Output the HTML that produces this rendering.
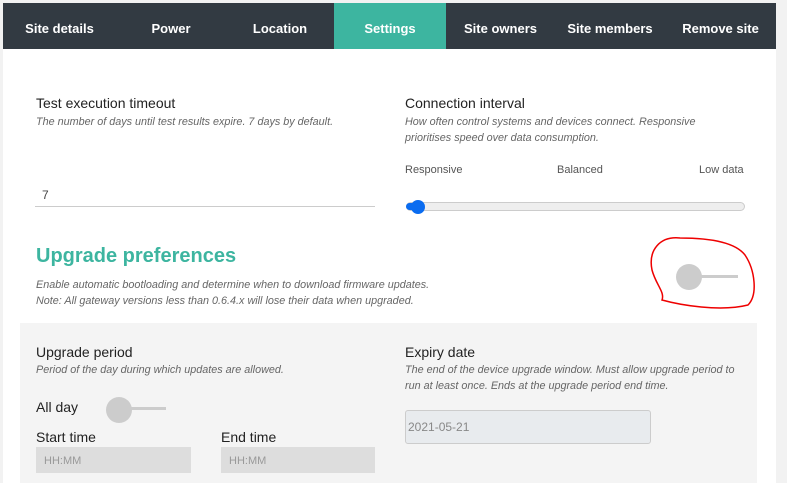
<!DOCTYPE html>
<html><head><style>
body{margin:0;width:787px;height:476px;background:#f2f2f2;font-family:"Liberation Sans",sans-serif;overflow:hidden;position:relative}
.card{position:absolute;left:3px;top:3px;width:773px;height:480px;background:#fff}
.nav{position:absolute;left:3px;top:3px;width:773px;height:46px;background:#323a42}
.tab{position:absolute;top:0;height:46px;line-height:51px;color:#fff;font-weight:bold;font-size:13px;text-align:center}
.a{position:absolute}
.t{font-size:14px;color:#222}
.d{font-size:10.8px;font-style:italic;color:#666;line-height:16px}
</style></head><body>
<div class="card"></div>
<div class="nav">
<div class="tab" style="left:0;width:113px">Site details</div>
<div class="tab" style="left:113px;width:110px">Power</div>
<div class="tab" style="left:223px;width:108px">Location</div>
<div class="tab" style="left:331px;width:112px;background:#3db5a0">Settings</div>
<div class="tab" style="left:443px;width:109px">Site owners</div>
<div class="tab" style="left:552px;width:110px">Site members</div>
<div class="tab" style="left:662px;width:111px">Remove site</div>
</div>
<div class="a t" style="left:36px;top:95px">Test execution timeout</div>
<div class="a d" style="left:36px;top:114px">The number of days until test results expire. 7 days by default.</div>
<div class="a" style="left:42px;top:188px;font-size:12px;color:#444">7</div>
<div class="a" style="left:35px;top:206px;width:340px;height:1px;background:#ccc"></div>
<div class="a t" style="left:405px;top:95px">Connection interval</div>
<div class="a d" style="left:405px;top:114px">How often control systems and devices connect. Responsive<br>prioritises speed over data consumption.</div>
<div class="a" style="left:405px;top:164px;font-size:11px;color:#555">Responsive</div>
<div class="a" style="left:557px;top:164px;font-size:11px;color:#555">Balanced</div>
<div class="a" style="left:699px;top:164px;font-size:11px;color:#555">Low data</div>
<div class="a" style="left:406px;top:202px;width:337px;height:7px;border:1px solid #ccc;border-radius:5px;background:#eee"></div>
<div class="a" style="left:406px;top:203px;width:14px;height:7px;border-radius:4px;background:#0a6cf0"></div>
<div class="a" style="left:411px;top:200px;width:14px;height:14px;border-radius:50%;background:#0a6cf0"></div>
<div class="a" style="left:36px;top:245px;font-size:20px;font-weight:bold;color:#3db5a0">Upgrade preferences</div>
<div class="a d" style="left:36px;top:277px">Enable automatic bootloading and determine when to download firmware updates.<br>Note: All gateway versions less than 0.6.4.x will lose their data when upgraded.</div>
<div class="a" style="left:690px;top:275px;width:48px;height:3px;background:#ccc"></div>
<div class="a" style="left:676px;top:264px;width:26px;height:26px;border-radius:50%;background:#ccc"></div>
<svg class="a" style="left:640px;top:230px" width="120" height="85"><path d="M40 8 C20 6 8 20 12 40 C16 55 25 62 22 70 C40 75 80 82 108 75 C118 65 115 40 105 25 C95 12 70 8 40 8 Z" fill="none" stroke="#e00" stroke-width="1.5"/></svg>
<div class="a" style="left:20px;top:323px;width:737px;height:160px;background:#f4f4f4"></div>
<div class="a t" style="left:36px;top:344px">Upgrade period</div>
<div class="a d" style="left:36px;top:362px">Period of the day during which updates are allowed.</div>
<div class="a t" style="left:36px;top:399px">All day</div>
<div class="a" style="left:118px;top:407px;width:48px;height:3px;background:#ccc"></div>
<div class="a" style="left:106px;top:397px;width:26px;height:26px;border-radius:50%;background:#ccc"></div>
<div class="a t" style="left:36px;top:429px">Start time</div>
<div class="a t" style="left:221px;top:429px">End time</div>
<div class="a" style="left:36px;top:447px;width:155px;height:26px;background:#ddd;font-size:11px;color:#999;line-height:28px;text-indent:8px">HH:MM</div>
<div class="a" style="left:221px;top:447px;width:154px;height:26px;background:#ddd;font-size:11px;color:#999;line-height:28px;text-indent:8px">HH:MM</div>
<div class="a t" style="left:405px;top:344px">Expiry date</div>
<div class="a d" style="left:405px;top:362px">The end of the device upgrade window. Must allow upgrade period to<br>run at least once. Ends at the upgrade period end time.</div>
<div class="a" style="left:405px;top:410px;width:244px;height:32px;background:#e8ebee;border:1px solid #ccc;border-radius:3px;font-size:12px;color:#888;line-height:33px;text-indent:2px">2021-05-21</div>
</body></html>
